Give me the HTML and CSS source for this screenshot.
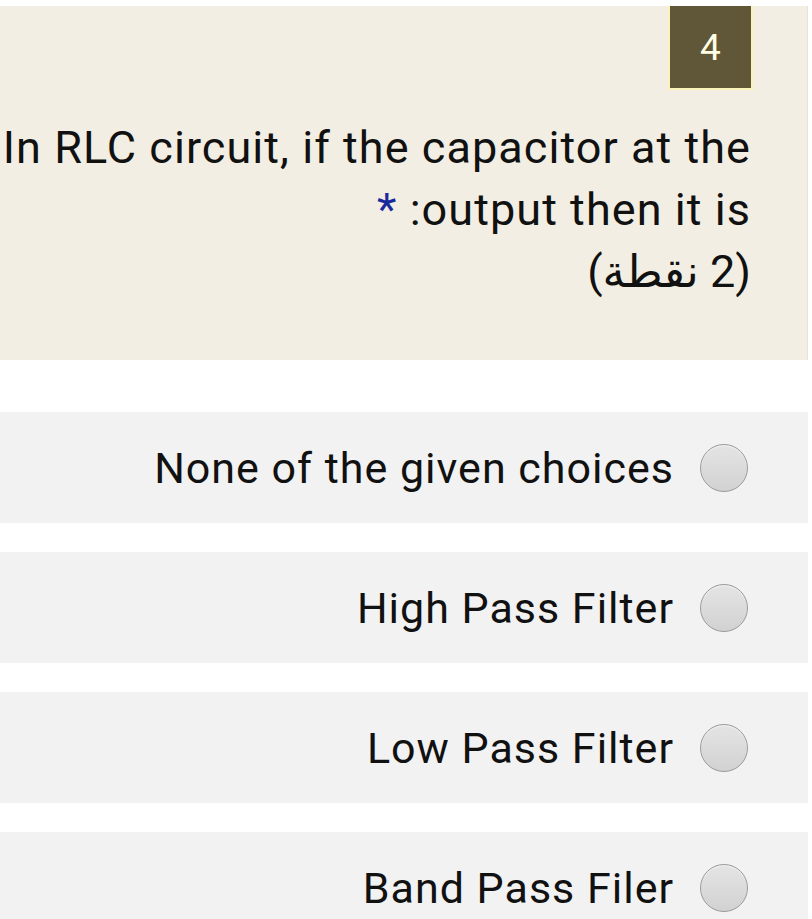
FILE: index.html
```html
<!DOCTYPE html>
<html>
<head>
<meta charset="utf-8">
<link rel="stylesheet" href="styles.css">
</head>
<body>
<div class="page">
  <section class="question">
    <div class="badge-row"><div class="badge">4</div></div>
    <div class="qtext">
      <span class="line">In RLC circuit, if the capacitor at the</span>
      <span class="line"><span class="req">*</span> :output then it is</span>
      <span class="line"><bdi dir="rtl" class="ar">(2 نقطة)</bdi></span>
    </div>
  </section>
  <div class="options">
    <label class="option"><span class="otext">None of the given choices</span><span class="radio"></span></label>
    <label class="option"><span class="otext">High Pass Filter</span><span class="radio"></span></label>
    <label class="option"><span class="otext">Low Pass Filter</span><span class="radio"></span></label>
    <label class="option"><span class="otext">Band Pass Filer</span><span class="radio"></span></label>
  </div>
</div>
</body>
</html>
```
FILE: styles.css
```css
html, body {
  margin: 0;
  padding: 0;
  background: #ffffff;
}
body {
  font-family: Roboto, "Liberation Sans", "DejaVu Sans", sans-serif;
  color: #111111;
}
.page {
  width: 808px;
  padding-top: 6px;
}
.question {
  background: #f2eee3;
  height: 354px;
  box-sizing: border-box;
  padding-right: 56px;
  border-right: 1px solid #e6e2d6;
}
.badge-row {
  display: flex;
  justify-content: flex-end;
}
.badge {
  width: 81px;
  height: 82px;
  background: #5f5737;
  border: 2px solid #fbf3b8;
  border-top: none;
  color: #fffde4;
  font-size: 37px;
  display: flex;
  align-items: center;
  justify-content: center;
  margin-right: -2px;
}
.qtext {
  text-align: right;
  font-size: 45px;
  letter-spacing: 1.05px;
  line-height: 62px;
  margin-top: 27px;
}
.line {
  display: block;
  white-space: nowrap;
}
.req {
  color: #1a2a9c;
}
.ar {
  font-family: Roboto, "DejaVu Sans", sans-serif;
  letter-spacing: 0;
}
.options {
  display: flex;
  flex-direction: column;
  gap: 29px;
  margin-top: 52px;
}
.option {
  height: 111px;
  background: #f2f2f2;
  display: flex;
  align-items: center;
  justify-content: flex-end;
  padding-right: 60px;
  gap: 26px;
}
.otext {
  font-size: 43px;
  letter-spacing: 1px;
}
.radio {
  width: 46px;
  height: 46px;
  border-radius: 50%;
  border: 1px solid #9a9a9a;
  background: linear-gradient(#e4e4e4, #d2d2d2);
  box-shadow: inset 0 1px 1px rgba(255,255,255,0.6);
}
```
